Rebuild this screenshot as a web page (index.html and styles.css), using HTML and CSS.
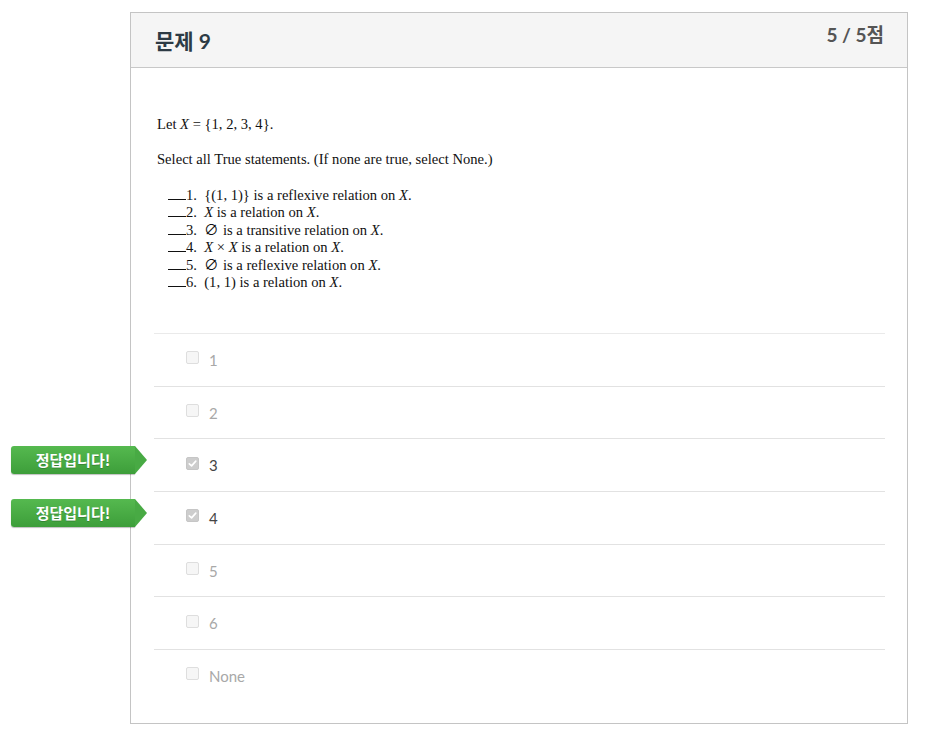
FILE: index.html
```html
<!DOCTYPE html>
<html lang="ko">
<head>
<meta charset="utf-8">
<link rel="stylesheet" href="styles.css">
</head>
<body>
<div class="card">
  <div class="card-header">
    <h2 class="title">문제 9</h2>
    <div class="points">5 / 5점</div>
  </div>
  <div class="card-body">
    <div class="question">
      <p class="q-line">Let <i>X</i> = {1, 2, 3, 4}.</p>
      <p class="q-line q-second">Select all True statements. (If none are true, select None.)</p>
      <ol class="stmts">
        <li><span class="blank"></span>1.&nbsp; {(1, 1)} is a reflexive relation on <i>X</i>.</li>
        <li><span class="blank"></span>2.&nbsp; <i>X</i> is a relation on <i>X</i>.</li>
        <li><span class="blank"></span>3.&nbsp; ∅ is a transitive relation on <i>X</i>.</li>
        <li><span class="blank"></span>4.&nbsp; <i>X</i> × <i>X</i> is a relation on <i>X</i>.</li>
        <li><span class="blank"></span>5.&nbsp; ∅ is a reflexive relation on <i>X</i>.</li>
        <li><span class="blank"></span>6.&nbsp; (1, 1) is a relation on <i>X</i>.</li>
      </ol>
    </div>
    <div class="answers">
      <div class="answer"><span class="box"></span><span class="label">1</span></div>
      <div class="answer"><span class="box"></span><span class="label">2</span></div>
      <div class="answer selected">
        <div class="badge">정답입니다!</div>
        <span class="box checked"><svg viewBox="0 0 12 12" width="11" height="11"><path d="M2.5 6.3 L5 8.6 L9.6 3.4" fill="none" stroke="#fff" stroke-width="1.8" stroke-linecap="round" stroke-linejoin="round"/></svg></span><span class="label">3</span>
      </div>
      <div class="answer selected">
        <div class="badge">정답입니다!</div>
        <span class="box checked"><svg viewBox="0 0 12 12" width="11" height="11"><path d="M2.5 6.3 L5 8.6 L9.6 3.4" fill="none" stroke="#fff" stroke-width="1.8" stroke-linecap="round" stroke-linejoin="round"/></svg></span><span class="label">4</span>
      </div>
      <div class="answer"><span class="box"></span><span class="label">5</span></div>
      <div class="answer"><span class="box"></span><span class="label">6</span></div>
      <div class="answer"><span class="box"></span><span class="label">None</span></div>
    </div>
  </div>
</div>
</body>
</html>
```

FILE: styles.css
```css
html, body {
  margin: 0;
  padding: 0;
  background: #fff;
}
body {
  font-family: Lato, "Noto Sans CJK KR", sans-serif;
  color: #333;
}
.card {
  margin: 12px 0 0 130px;
  width: 776px;
  height: 710px;
  border: 1px solid #c4c4c4;
  box-sizing: content-box;
}
.card-header {
  height: 54px;
  background: #f5f5f5;
  border-bottom: 1px solid #c8c8c8;
  display: flex;
  justify-content: space-between;
  align-items: flex-start;
  padding: 0 23px 0 24px;
}
.title {
  margin: 15px 0 0 0;
  font-size: 21px;
  font-weight: 700;
  color: #2d3b45;
  line-height: 26px;
  font-family: Lato, "Noto Sans CJK KR", sans-serif;
}
.points {
  margin-top: 10px;
  font-size: 19px;
  font-weight: 700;
  color: #555;
  line-height: 24px;
}
.card-body {
  padding: 0 22px 0 23px;
}
.question {
  padding: 47px 0 0 3px;
  height: 218px;
  font-family: "Liberation Serif", "Times New Roman", serif;
  font-size: 14.6px;
  color: #111;
}
.q-line {
  margin: 0;
  line-height: 18px;
}
.q-second {
  margin-top: 17px;
}
.stmts {
  list-style: none;
  margin: 19px 0 0 0;
  padding: 0 0 0 11px;
}
.stmts li {
  line-height: 17.4px;
  height: 17.4px;
}
.blank {
  display: inline-block;
  width: 18px;
  border-bottom: 1px solid #111;
  vertical-align: baseline;
  margin-right: 0;
}
.answers {
  border-top: 1px solid #eaeaea;
}
.answer {
  position: relative;
  height: 51.7px;
  border-bottom: 1px solid #e2e2e2;
  display: flex;
  align-items: center;
  padding-left: 32px;
}
.answer:last-child {
  border-bottom: none;
}
.box {
  width: 11px;
  height: 11px;
  border: 1px solid #dedede;
  border-radius: 2px;
  background: #f6f6f6;
  margin-right: 10px;
  margin-top: -4px;
  display: inline-flex;
  align-items: center;
  justify-content: center;
}
.box.checked {
  background: #cdcdcd;
  border-color: #c6c6c6;
}
.label {
  font-size: 15px;
  color: #a8a8a8;
  line-height: 20px;
}
.selected .label {
  color: #444;
}
.badge {
  position: absolute;
  left: -143px;
  top: 7px;
  width: 124px;
  height: 28px;
  line-height: 27px;
  text-align: center;
  color: #fff;
  font-weight: 700;
  font-size: 15px;
  font-family: "Noto Sans CJK KR", sans-serif;
  background: linear-gradient(#55b94f, #3d9e3a);
  border-radius: 3px 0 0 3px;
  box-shadow: 0 1px 1px rgba(0,0,0,0.25);
  text-shadow: 0 1px 0 rgba(0,0,0,0.2);
}
.badge::after {
  content: "";
  position: absolute;
  right: -12px;
  top: 0;
  width: 0;
  height: 0;
  border-top: 14px solid transparent;
  border-bottom: 14px solid transparent;
  border-left: 12px solid #48aa44;
}
```
